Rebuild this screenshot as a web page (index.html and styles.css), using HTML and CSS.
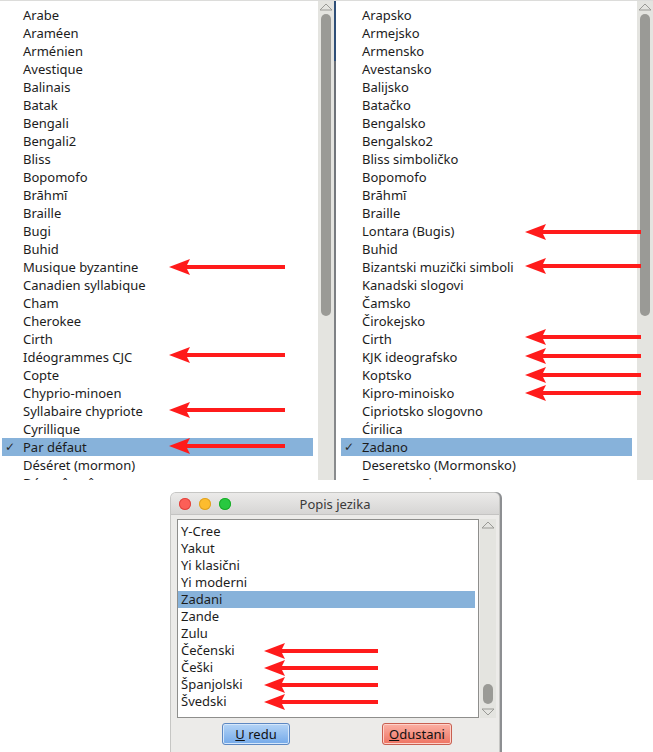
FILE: index.html
```html
<!DOCTYPE html>
<html lang="hr">
<head>
<meta charset="utf-8">
<title>Popis jezika</title>
<link rel="stylesheet" href="styles.css">
</head>
<body>
<div class="page">
  <div class="panes">
    <ul class="list list-left">
      <li>Arabe</li><li>Araméen</li><li>Arménien</li><li>Avestique</li><li>Balinais</li><li>Batak</li><li>Bengali</li><li>Bengali2</li><li>Bliss</li><li>Bopomofo</li><li>Brāhmī</li><li>Braille</li><li>Bugi</li><li>Buhid</li><li>Musique byzantine</li><li>Canadien syllabique</li><li>Cham</li><li>Cherokee</li><li>Cirth</li><li>Idéogrammes CJC</li><li>Copte</li><li>Chyprio-minoen</li><li>Syllabaire chypriote</li><li>Cyrillique</li><li class="sel"><span class="check">✓</span>Par défaut</li><li>Déséret (mormon)</li><li>Dévanâgarî</li>
    </ul>
    <div class="vscroll">
      <svg class="arrow-up" width="14" height="9" viewBox="0 0 14 9"><polyline points="1,8 7,2 13,8" fill="none" stroke="#9a9a96" stroke-width="1"/><line x1="1" y1="8" x2="13" y2="8" stroke="#9a9a96" stroke-width="1"/></svg>
      <div class="thumb thumb-long"></div>
    </div>
    <div class="sep"></div>
    <ul class="list list-right">
      <li>Arapsko</li><li>Armejsko</li><li>Armensko</li><li>Avestansko</li><li>Balijsko</li><li>Batačko</li><li>Bengalsko</li><li>Bengalsko2</li><li>Bliss simboličko</li><li>Bopomofo</li><li>Brāhmī</li><li>Braille</li><li>Lontara (Bugis)</li><li>Buhid</li><li>Bizantski muzički simboli</li><li>Kanadski slogovi</li><li>Čamsko</li><li>Čirokejsko</li><li>Cirth</li><li>KJK ideografsko</li><li>Koptsko</li><li>Kipro-minoisko</li><li>Cipriotsko slogovno</li><li>Ćirilica</li><li class="sel"><span class="check">✓</span>Zadano</li><li>Deseretsko (Mormonsko)</li><li>Devanagari</li>
    </ul>
    <div class="vscroll">
      <svg class="arrow-up" width="14" height="9" viewBox="0 0 14 9"><polyline points="1,8 7,2 13,8" fill="none" stroke="#9a9a96" stroke-width="1"/><line x1="1" y1="8" x2="13" y2="8" stroke="#9a9a96" stroke-width="1"/></svg>
      <div class="thumb thumb-long"></div>
    </div>
  </div>

  <div class="dialog">
    <div class="titlebar">
      <div class="lights">
        <span class="light red"></span><span class="light yellow"></span><span class="light green"></span>
      </div>
      <div class="title">Popis jezika</div>
      <div></div>
    </div>
    <div class="dlg-body">
      <div class="listbox-row">
        <ul class="listbox">
          <li>Y-Cree</li><li>Yakut</li><li>Yi klasični</li><li>Yi moderni</li><li class="sel">Zadani</li><li>Zande</li><li>Zulu</li><li>Čečenski</li><li>Češki</li><li>Španjolski</li><li>Švedski</li>
        </ul>
        <div class="dscroll">
          <svg width="14" height="9" viewBox="0 0 14 9"><polyline points="1,8 7,2 13,8" fill="none" stroke="#9a9a96" stroke-width="1"/><line x1="1" y1="8" x2="13" y2="8" stroke="#9a9a96" stroke-width="1"/></svg>
          <div class="dspacer"></div>
          <div class="thumb thumb-short"></div>
          <svg width="14" height="9" viewBox="0 0 14 9"><polyline points="1,1 7,7 13,1" fill="none" stroke="#9a9a96" stroke-width="1"/><line x1="1" y1="1" x2="13" y2="1" stroke="#9a9a96" stroke-width="1"/></svg>
        </div>
      </div>
      <div class="buttons">
        <button class="btn btn-ok"><u>U</u> redu</button>
        <button class="btn btn-cancel"><u>O</u>dustani</button>
      </div>
    </div>
  </div>

  <svg class="arrows" width="653" height="752" viewBox="0 0 653 752">
    <g fill="#ff1b1b" stroke="none">
      <rect x="185" y="265" width="100" height="4"/><polygon points="169,267 190,259 186,267 190,275"/>
      <rect x="185" y="353" width="100" height="4"/><polygon points="169,355 190,347 186,355 190,363"/>
      <rect x="185" y="408" width="100" height="4"/><polygon points="169,410 190,402 186,410 190,418"/>
      <rect x="185" y="444" width="100" height="4"/><polygon points="169,446 190,438 186,446 190,454"/>
      <rect x="541" y="230" width="100" height="4"/><polygon points="525,232 546,224 542,232 546,240"/>
      <rect x="541" y="264" width="100" height="4"/><polygon points="525,266 546,258 542,266 546,274"/>
      <rect x="541" y="335" width="100" height="4"/><polygon points="525,337 546,329 542,337 546,345"/>
      <rect x="541" y="354" width="100" height="4"/><polygon points="525,356 546,348 542,356 546,364"/>
      <rect x="541" y="373" width="100" height="4"/><polygon points="525,375 546,367 542,375 546,383"/>
      <rect x="541" y="391" width="100" height="4"/><polygon points="525,393 546,385 542,393 546,401"/>
      <rect x="280" y="649" width="98" height="4"/><polygon points="264,651 285,643 281,651 285,659"/>
      <rect x="280" y="666" width="98" height="4"/><polygon points="264,668 285,660 281,668 285,676"/>
      <rect x="280" y="683" width="98" height="4"/><polygon points="264,685 285,677 281,685 285,693"/>
      <rect x="280" y="700" width="98" height="4"/><polygon points="264,702 285,694 281,702 285,710"/>
    </g>
  </svg>
</div>
</body>
</html>
```

FILE: styles.css
```css
* { box-sizing: border-box; }
html, body {
  margin: 0;
  padding: 0;
  background: #ffffff;
}
body {
  font-family: "Noto Sans", "Open Sans", "DejaVu Sans", sans-serif;
  font-size: 13px;
  color: #1c1c1c;
  width: 653px;
  height: 752px;
  overflow: hidden;
}
.page {
  position: relative;
  width: 653px;
  height: 752px;
}
.panes {
  display: flex;
  height: 480px;
  overflow: hidden;
  border-top: 1px solid #dcdcda;
}
.list {
  list-style: none;
  margin: 0;
  padding: 5px 0 0 0;
  background: #ffffff;
  overflow: hidden;
}
.list li {
  position: relative;
  height: 18px;
  line-height: 18px;
  padding-left: 21px;
  white-space: nowrap;
}
.list-left { width: 318px; }
.list-left li { margin: 0 5px 0 2px; }
.list-right { width: 301px; }
.list-right li { margin: 0 5px 0 5px; }
.list li.sel { background: #87b2da; }
.check {
  position: absolute;
  left: 3px;
  top: 0;
  font-family: "DejaVu Sans", sans-serif;
  font-size: 12px;
  color: #2a2a2a;
}
.vscroll {
  width: 16px;
  background: #e4e4e0;
  display: flex;
  flex-direction: column;
  align-items: center;
}
.arrow-up { margin-top: 1px; flex: none; }
.thumb {
  width: 10px;
  background: #9a9a96;
  border-radius: 5px;
  flex: none;
}
.thumb-long { height: 302px; margin-top: 3px; }
.sep {
  width: 2px;
  background: linear-gradient(#2f4f78 0, #2f4f78 60px, #6a6f76 60px, #8a8c8e 480px);
}

.dialog {
  margin: 13px 0 0 171px;
  width: 328px;
  height: 259px;
  background: #ecebe9;
  border-radius: 5px 5px 0 0;
  box-shadow: 0 0 0 1px #c6c6c4, 2px 0 0 1px #8d8f92;
}
.titlebar {
  height: 22px;
  display: grid;
  grid-template-columns: 1fr auto 1fr;
  align-items: center;
  background: linear-gradient(#ebeae9, #d6d5d4);
  border-radius: 5px 5px 0 0;
  border-bottom: 1px solid #c4c3c2;
}
.lights {
  display: flex;
  gap: 8px;
  padding-left: 8px;
}
.light {
  width: 12px;
  height: 12px;
  border-radius: 50%;
}
.red { background: #fc5f57; box-shadow: inset 0 0 0 1px #e0443e; }
.yellow { background: #fdbc2e; box-shadow: inset 0 0 0 1px #dea123; }
.green { background: #28c840; box-shadow: inset 0 0 0 1px #1aab29; }
.title {
  color: #3a3a3a;
  font-size: 13px;
}
.dlg-body {
  padding: 4px 0 0 6px;
}
.listbox-row {
  display: flex;
  height: 199px;
}
.listbox {
  list-style: none;
  margin: 0;
  padding: 3px 3px 0 0;
  width: 302px;
  height: 199px;
  background: #ffffff;
  border: 1px solid #8e8e8c;
  overflow: hidden;
}
.listbox li {
  height: 17px;
  line-height: 17px;
  padding-left: 3px;
  white-space: nowrap;
}
.listbox li.sel { background: #87b2da; }
.dscroll {
  width: 16px;
  margin-left: 1px;
  background: #e4e4e0;
  display: flex;
  flex-direction: column;
  align-items: center;
  padding: 1px 0 1px 0;
}
.dspacer { flex: 1; }
.thumb-short { height: 20px; margin-bottom: 4px; }
.buttons {
  display: flex;
  margin-top: 5px;
  padding-left: 45px;
  gap: 92px;
}
.btn {
  height: 22px;
  padding: 0;
  font-family: "Noto Sans", "Open Sans", sans-serif;
  font-size: 13px;
  color: #111;
  border-radius: 3px;
  line-height: 18px;
}
.btn-ok {
  width: 68px;
  background: linear-gradient(#b4d4f6, #74a9e9);
  border: 1px solid #5d88c2;
  box-shadow: inset 0 0 0 1px #d6e7fa;
}
.btn-cancel {
  width: 70px;
  background: linear-gradient(#fbb0a3, #ee7362);
  border: 1px solid #c85f50;
  box-shadow: inset 0 0 0 1px #fdd2ca;
}
.arrows {
  position: absolute;
  left: 0;
  top: 0;
  pointer-events: none;
}
```
